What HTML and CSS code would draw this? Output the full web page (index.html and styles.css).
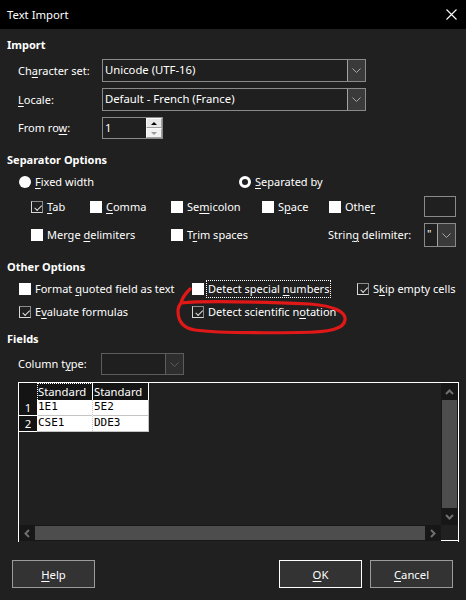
FILE: index.html
```html
<!DOCTYPE html>
<html lang="en">
<head>
<meta charset="UTF-8">
<title>Text Import</title>
<link rel="stylesheet" href="styles.css">
</head>
<body>
<div class="dialog">
	<div class="titlebar">
		<span>Text Import</span>
		<svg class="close" width="11" height="11" viewBox="0 0 11 11"><path d="M0.5 0.5 L10.5 10.5 M10.5 0.5 L0.5 10.5" stroke="#fff" stroke-width="1.1" fill="none"/></svg>
	</div>

	<div class="content">
		<h2 class="section">Import</h2>
		<div class="row row-combo">
			<label class="lbl">Ch<u>a</u>racter set:</label>
			<div class="combo combo-wide"><span class="combo-text">Unicode (UTF-16)</span><span class="combo-btn"><svg width="9" height="5" viewBox="0 0 9 5"><path d="M0.5 0.5 L4.5 4.5 L8.5 0.5" stroke="#a8a8a8" fill="none"/></svg></span></div>
		</div>
		<div class="row row-combo">
			<label class="lbl"><u>L</u>ocale:</label>
			<div class="combo combo-wide"><span class="combo-text">Default - French (France)</span><span class="combo-btn"><svg width="9" height="5" viewBox="0 0 9 5"><path d="M0.5 0.5 L4.5 4.5 L8.5 0.5" stroke="#a8a8a8" fill="none"/></svg></span></div>
		</div>
		<div class="row row-spin">
			<label class="lbl">From ro<u>w</u>:</label>
			<div class="spin"><span class="combo-text">1</span>
				<span class="spin-btns">
					<span class="spin-up"><i class="tri-up"></i></span>
					<span class="spin-down"><i class="tri-down"></i></span>
				</span>
			</div>
		</div>

		<h2 class="section sep-head">Separator Options</h2>
		<div class="row row-radio">
			<span class="opt w-fixed"><i class="radio filled"></i><span class="txt"><u>F</u>ixed width</span></span>
			<span class="opt"><i class="radio ring"></i><span class="txt"><u>S</u>eparated by</span></span>
		</div>
		<div class="row row-seps">
			<span class="opt w-tab"><i class="cb on"></i><span class="txt"><u>T</u>ab</span></span>
			<span class="opt w-comma"><i class="cb"></i><span class="txt"><u>C</u>omma</span></span>
			<span class="opt w-semi"><i class="cb"></i><span class="txt">Se<u>m</u>icolon</span></span>
			<span class="opt w-space"><i class="cb"></i><span class="txt">S<u>p</u>ace</span></span>
			<span class="opt w-other"><i class="cb"></i><span class="txt">Othe<u>r</u></span></span>
			<span class="textbox"></span>
		</div>
		<div class="row row-merge">
			<span class="opt w-merge"><i class="cb"></i><span class="txt">Merge <u>d</u>elimiters</span></span>
			<span class="opt w-trim"><i class="cb"></i><span class="txt">T<u>r</u>im spaces</span></span>
			<span class="str-lbl">Strin<u>g</u> delimiter:</span>
			<div class="combo combo-small"><span class="combo-text">"</span><span class="combo-btn"><svg width="9" height="5" viewBox="0 0 9 5"><path d="M0.5 0.5 L4.5 4.5 L8.5 0.5" stroke="#a8a8a8" fill="none"/></svg></span></div>
		</div>

		<h2 class="section other-head">Other Options</h2>
		<div class="row row-other first">
			<span class="opt w-quoted"><i class="cb"></i><span class="txt">Format <u>q</u>uoted field as text</span></span>
			<span class="opt w-special"><i class="cb"></i><span class="txt focus">Detect special <u>n</u>umbers</span></span>
			<span class="opt"><i class="cb on"></i><span class="txt">S<u>k</u>ip empty cells</span></span>
		</div>
		<div class="row row-other second">
			<span class="opt w-quoted"><i class="cb on"></i><span class="txt">E<u>v</u>aluate formulas</span></span>
			<span class="opt w-special"><i class="cb on"></i><span class="txt">Detect scientific n<u>o</u>tation</span></span>
		</div>

		<h2 class="section fields-head">Fields</h2>
		<div class="row row-coltype">
			<label class="lbl lbl-col">Column t<u>y</u>pe:</label>
			<div class="combo combo-off"><span class="combo-text"></span><span class="combo-btn"><svg width="9" height="5" viewBox="0 0 9 5"><path d="M0.5 0.5 L4.5 4.5 L8.5 0.5" stroke="#5a5a5a" fill="none"/></svg></span></div>
		</div>

		<div class="preview">
			<div class="grid-area">
				<table class="grid">
					<tr class="head"><td class="rowhead"></td><td>Standard</td><td>Standard</td></tr>
					<tr><td class="rowhead">1</td><td class="cell">1E1</td><td class="cell">5E2</td></tr>
					<tr><td class="rowhead">2</td><td class="cell">CSE1</td><td class="cell">DDE3</td></tr>
				</table>
				<div class="col-focus"></div>
			</div>
			<div class="vscroll">
				<span class="sb-btn"><svg width="9" height="6" viewBox="0 0 9 6"><path d="M1 5 L4.5 1.5 L8 5" stroke="#6f6f6f" stroke-width="2" fill="none"/></svg></span>
				<span class="vthumb"></span>
				<span class="sb-btn"><svg width="9" height="6" viewBox="0 0 9 6"><path d="M1 1 L4.5 4.5 L8 1" stroke="#6f6f6f" stroke-width="2" fill="none"/></svg></span>
			</div>
			<div class="hscroll">
				<span class="sb-btn"><svg width="6" height="9" viewBox="0 0 6 9"><path d="M5 1 L1.5 4.5 L5 8" stroke="#6f6f6f" stroke-width="2" fill="none"/></svg></span>
				<span class="hthumb"></span>
				<span class="sb-btn"><svg width="6" height="9" viewBox="0 0 6 9"><path d="M1 1 L4.5 4.5 L1 8" stroke="#6f6f6f" stroke-width="2" fill="none"/></svg></span>
			</div>
			<div class="corner"></div>
		</div>
	</div>

	<div class="buttons">
		<button class="btn"><u>H</u>elp</button>
		<span class="spacer"></span>
		<button class="btn btn-default"><u>O</u>K</button>
		<button class="btn"><u>C</u>ancel</button>
	</div>

	<!-- pen mark drawn round the scientific notation option -->
	<svg class="pen" width="466" height="600" viewBox="0 0 466 600">
		<path d="M190 289 C186 293 182 298 181 303 C200 301 260 302 310 304 C335 306 346 312 345 320 C344 329 330 332 300 332.5 C260 333 215 333 195 330 C182 328 178 320 178 311 C178 306 180 304 182 302" stroke="#e01818" stroke-width="3.2" fill="none" stroke-linecap="round" stroke-linejoin="round"/>
	</svg>
</div>
</body>
</html>
```

FILE: styles.css
```css
html, body, div, h2, table, td, button { margin:0; padding:0; }
body { width:466px; height:600px; overflow:hidden; background:#202020; color:#fff; font:normal 11px "Noto Sans", "Open Sans", sans-serif; }
u { text-decoration:underline; text-underline-offset:2px; }
.dialog { position:relative; width:466px; height:600px; }

/* title bar */
.titlebar { display:flex; align-items:center; justify-content:space-between; height:29px; padding:0 9px 0 7px; background:#000; box-sizing:border-box; font-size:11.3px; }
.close { display:block; }

.content { padding:0 7px; }
.section { height:16px; margin-top:8px; font-size:11px; font-weight:bold; line-height:16px; }
.sep-head { margin-top:13px; }
.other-head { margin-top:12px; }
.fields-head { margin-top:11px; }

.row { display:flex; align-items:center; }
.lbl { width:84px; margin-left:11px; line-height:16px; }
.lbl-col { width:83px; }
.row-combo { height:23px; margin-top:6px; }
.row-spin { height:22px; margin-top:6px; }

/* combo boxes */
.combo { display:flex; height:100%; border:1px solid #8a8a8a; box-sizing:border-box; background:#1f1f1f; }
.combo-wide { width:264px; font-size:11.3px; }
.combo-small { width:32px; height:24px; }
.combo-off { width:83px; border-color:#5c5c5c; }
.combo-text { flex:1; padding-left:2px; line-height:20px; overflow:hidden; white-space:nowrap; }
.combo-btn { display:flex; align-items:center; justify-content:center; width:17px; background:#3a3a3a; border-left:1px solid #a2a2a2; }
.combo-off .combo-btn { background:#2e2e2e; border-left-color:#5c5c5c; }

.spin { display:flex; width:61px; height:22px; border:1px solid #8a8a8a; box-sizing:border-box; font-size:11.3px; }
.spin-btns { display:flex; flex-direction:column; width:16px; }
.spin-up, .spin-down { display:flex; flex:1; align-items:center; justify-content:center; background:#e8e8e8; border:1px solid #fafafa; border-right-color:#a0a0a0; border-bottom-color:#a0a0a0; }
.spin-down { background:#f2f2f2; }
.tri-up { width:0; height:0; border-left:3px solid transparent; border-right:3px solid transparent; border-bottom:3px solid #000; }
.tri-down { width:0; height:0; border-left:3px solid transparent; border-right:3px solid transparent; border-top:3px solid #9a9a9a; }

/* radios and check boxes */
.opt { display:flex; align-items:center; flex-shrink:0; line-height:16px; }
.txt { padding:0 1px; margin-left:3px; white-space:nowrap; }
.txt.focus { outline:1px dotted #fff; outline-offset:0; }
.radio { display:block; width:12px; height:12px; border-radius:50%; box-sizing:border-box; }
.radio.filled { background:#fff; }
.radio.ring { border:3px solid #fff; background:#202020; }
.cb { position:relative; display:block; width:12px; height:12px; background:#fff; box-sizing:border-box; }
.cb.on { background:#202020; border:1px solid #d8d8d8; border-top-color:#8c8c8c; border-right-color:#8c8c8c; }
.cb.on::after { content:""; position:absolute; left:2px; top:1px; width:6px; height:3px; border-left:1.5px solid #dcdcdc; border-bottom:1.5px solid #dcdcdc; transform:rotate(-45deg) translate(-1px, 2px); }

.row-radio { height:16px; margin-top:6px; margin-left:12px; }
.w-fixed { width:220px; }
.row-seps { height:21px; margin-top:6px; margin-left:24px; }
.w-tab { width:59px; }
.w-comma { width:81px; }
.w-semi { width:91px; }
.w-space { width:67px; }
.w-other { width:95px; }
.textbox { display:block; width:32px; height:21px; border:1px solid #8a8a8a; box-sizing:border-box; }
.row-merge { height:24px; margin-top:6px; margin-left:24px; }
.w-merge { width:140px; }
.w-trim { width:157px; }
.str-lbl { width:96px; line-height:16px; }

.row-other { height:16px; margin-left:12px; }
.row-other.first { margin-top:6px; }
.row-other.second { margin-top:7px; }
.w-quoted { width:173px; }
.w-special { width:165px; }

.row-coltype { height:22px; margin-top:6px; }

/* preview grid */
.preview { display:grid; grid-template-columns:422px 17px; grid-template-rows:142px 16px; width:441px; height:160px; margin:7px 0 0 11px; border:1px solid #fff; border-bottom:0; box-sizing:border-box; }
.grid-area { position:relative; overflow:hidden; }
.grid { border-collapse:collapse; font-size:11.3px; }
.grid td { height:15px; padding:0 0 0 1px; line-height:14px; vertical-align:bottom; white-space:nowrap; }
.grid .head td { height:17px; background:#141414; color:#fff; border-right:1px solid #fff; line-height:16px; }
.grid td.rowhead { width:18px; padding:0; text-align:center; background:#141414; border-bottom:1px solid #fff; }
.grid .head td.rowhead { border:0; }
.grid td.cell { width:54px; background:#fff; color:#000; font:11px "DejaVu Sans Mono", monospace; line-height:14px; border-bottom:1px solid #c4c4c4; border-right:1px solid #c4c4c4; vertical-align:top; }
.col-focus { position:absolute; left:18px; top:0; width:56px; height:47px; outline:1px dotted #fff; outline-offset:-1px; box-sizing:border-box; border:1px dotted #000; }

.vscroll { display:flex; flex-direction:column; background:#171717; }
.hscroll { display:flex; background:#171717; }
.sb-btn { display:flex; align-items:center; justify-content:center; flex:0 0 17px; }
.hscroll .sb-btn { flex-basis:16px; }
.vthumb { flex:1; margin:0 1px; background:#4d4d4d; }
.hthumb { flex:1; margin:1px 0; background:#4d4d4d; }
.corner { background:#202020; border-bottom:1px solid #fff; }

/* dialog buttons */
.buttons { display:flex; gap:8px; margin-top:18px; padding:0 13px 0 12px; }
.spacer { flex:1; }
.btn { width:83px; height:28px; background:#333; color:#fff; font:inherit; font-size:11.3px; border:1px solid #9b9b9b; box-sizing:border-box; }
.btn-default { border-color:#fff; }

.pen { position:absolute; left:0; top:0; pointer-events:none; }
```
